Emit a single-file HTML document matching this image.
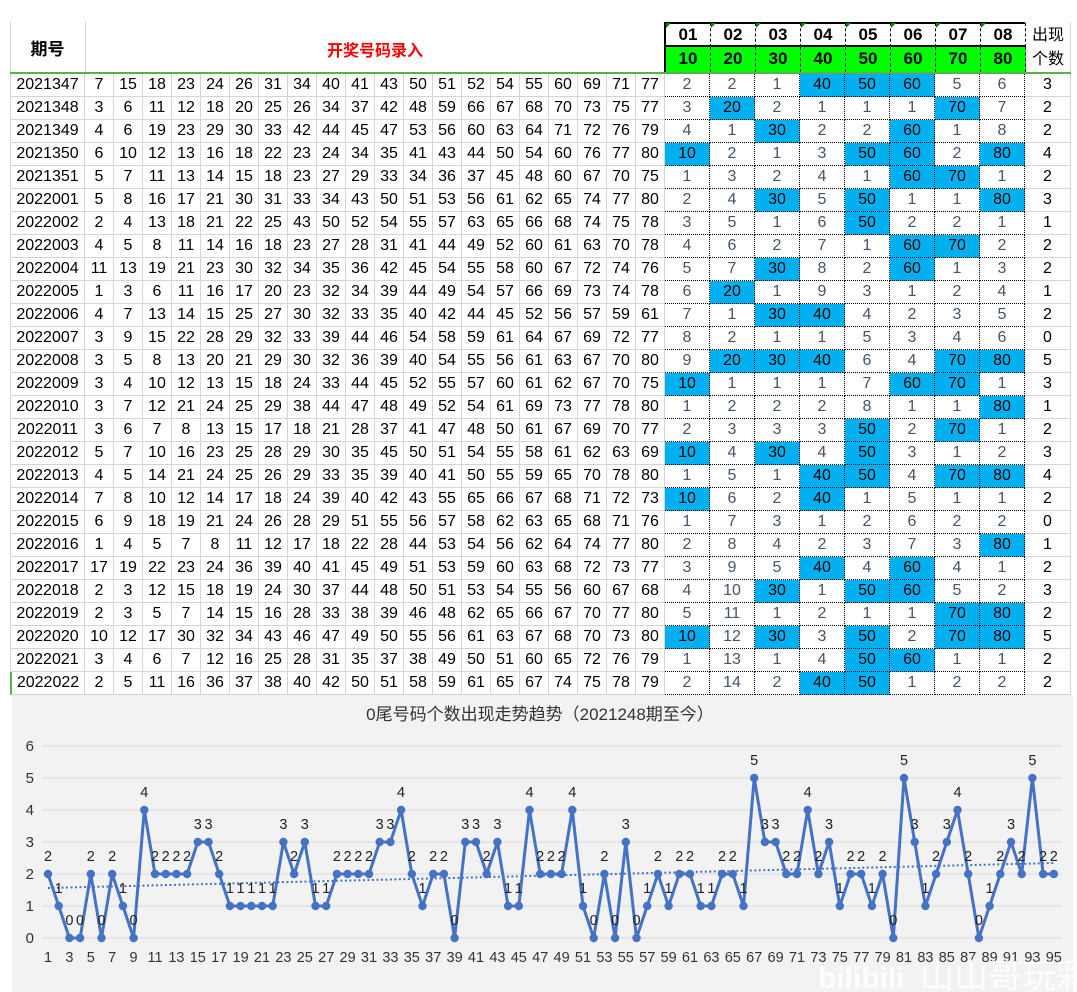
<!DOCTYPE html>
<html><head><meta charset="utf-8"><style>
*{box-sizing:border-box;margin:0;padding:0}
body{width:1077px;height:992px;background:#fff;position:relative;overflow:hidden;font-family:"Liberation Sans","Noto Sans CJK SC",sans-serif;color:#000}
.a{position:absolute}
#t{position:absolute;left:10px;top:72px;border-top:2px solid #5cb04a}
.r{display:flex;height:23px}
.r>*{display:block;height:23px;line-height:22px;text-align:center;font-size:16px;font-style:normal;font-weight:normal;text-decoration:none;border-right:1px solid #d4d4d4;border-bottom:1px solid #d4d4d4}
.r s{width:75px;border-left:1px solid #d4d4d4}
.r i{width:29px}
.r b{width:45px;color:#44546a;border-right:1px dotted #000;border-bottom:1px dotted #000}
.r b.c{background:#00b0f0;color:#000}
.r u{width:46px}
.h1,.h2{position:absolute;width:45px;height:24px;line-height:24px;text-align:center;font-weight:bold;font-size:17px;border-right:1px dashed #000}
.h2{background:#00ff00;height:25px}
.tri{position:absolute;width:0;height:0;border-top:5px solid #008000;border-right:5px solid transparent}
</style></head><body>
<div class="a" style="left:10px;top:22px;width:1px;height:50px;background:#d4d4d4"></div>
<div class="a" style="left:85px;top:22px;width:1px;height:50px;background:#d4d4d4"></div>
<div class="a" style="left:10px;top:35px;width:75px;text-align:center;font-weight:bold;font-size:17px">期号</div>
<div class="a" style="left:290px;top:37px;width:170px;text-align:center;font-weight:bold;font-size:16px;color:#ff0000">开奖号码录入</div>
<div class="a" style="left:664px;top:22px;width:361px;height:50px;border:2px solid #000;border-right:none"></div>
<div class="a" style="left:664px;top:45px;width:361px;height:2px;background:#000"></div>
<div class="h1" style="left:666px;top:23px">01</div><div class="h1" style="left:711px;top:23px">02</div><div class="h1" style="left:756px;top:23px">03</div><div class="h1" style="left:801px;top:23px">04</div><div class="h1" style="left:846px;top:23px">05</div><div class="h1" style="left:891px;top:23px">06</div><div class="h1" style="left:936px;top:23px">07</div><div class="h1" style="left:981px;top:23px">08</div>
<div class="h2" style="left:666px;top:47px">10</div><div class="h2" style="left:711px;top:47px">20</div><div class="h2" style="left:756px;top:47px">30</div><div class="h2" style="left:801px;top:47px">40</div><div class="h2" style="left:846px;top:47px">50</div><div class="h2" style="left:891px;top:47px">60</div><div class="h2" style="left:936px;top:47px">70</div><div class="h2" style="left:981px;top:47px">80</div>
<div class="tri" style="left:666px;top:23px"></div><div class="tri" style="left:711px;top:23px"></div><div class="tri" style="left:756px;top:23px"></div><div class="tri" style="left:801px;top:23px"></div><div class="tri" style="left:846px;top:23px"></div><div class="tri" style="left:891px;top:23px"></div><div class="tri" style="left:936px;top:23px"></div><div class="tri" style="left:981px;top:23px"></div>
<div class="a" style="left:1025px;top:24px;width:46px;text-align:center;font-size:16px;line-height:24px">出现<br>个数</div>
<div class="a" style="left:1070px;top:22px;width:1px;height:50px;background:#d4d4d4"></div>

<div id="t">
<div class="r"><s>2021347</s><i>7</i><i>15</i><i>18</i><i>23</i><i>24</i><i>26</i><i>31</i><i>34</i><i>40</i><i>41</i><i>43</i><i>50</i><i>51</i><i>52</i><i>54</i><i>55</i><i>60</i><i>69</i><i>71</i><i>77</i><b>2</b><b>2</b><b>1</b><b class="c">40</b><b class="c">50</b><b class="c">60</b><b>5</b><b>6</b><u>3</u></div>
<div class="r"><s>2021348</s><i>3</i><i>6</i><i>11</i><i>12</i><i>18</i><i>20</i><i>25</i><i>26</i><i>34</i><i>37</i><i>42</i><i>48</i><i>59</i><i>66</i><i>67</i><i>68</i><i>70</i><i>73</i><i>75</i><i>77</i><b>3</b><b class="c">20</b><b>2</b><b>1</b><b>1</b><b>1</b><b class="c">70</b><b>7</b><u>2</u></div>
<div class="r"><s>2021349</s><i>4</i><i>6</i><i>19</i><i>23</i><i>29</i><i>30</i><i>33</i><i>42</i><i>44</i><i>45</i><i>47</i><i>53</i><i>56</i><i>60</i><i>63</i><i>64</i><i>71</i><i>72</i><i>76</i><i>79</i><b>4</b><b>1</b><b class="c">30</b><b>2</b><b>2</b><b class="c">60</b><b>1</b><b>8</b><u>2</u></div>
<div class="r"><s>2021350</s><i>6</i><i>10</i><i>12</i><i>13</i><i>16</i><i>18</i><i>22</i><i>23</i><i>24</i><i>34</i><i>35</i><i>41</i><i>43</i><i>44</i><i>50</i><i>54</i><i>60</i><i>76</i><i>77</i><i>80</i><b class="c">10</b><b>2</b><b>1</b><b>3</b><b class="c">50</b><b class="c">60</b><b>2</b><b class="c">80</b><u>4</u></div>
<div class="r"><s>2021351</s><i>5</i><i>7</i><i>11</i><i>13</i><i>14</i><i>15</i><i>18</i><i>23</i><i>27</i><i>29</i><i>33</i><i>34</i><i>36</i><i>37</i><i>45</i><i>48</i><i>60</i><i>67</i><i>70</i><i>75</i><b>1</b><b>3</b><b>2</b><b>4</b><b>1</b><b class="c">60</b><b class="c">70</b><b>1</b><u>2</u></div>
<div class="r"><s>2022001</s><i>5</i><i>8</i><i>16</i><i>17</i><i>21</i><i>30</i><i>31</i><i>33</i><i>34</i><i>43</i><i>50</i><i>51</i><i>53</i><i>56</i><i>61</i><i>62</i><i>65</i><i>74</i><i>77</i><i>80</i><b>2</b><b>4</b><b class="c">30</b><b>5</b><b class="c">50</b><b>1</b><b>1</b><b class="c">80</b><u>3</u></div>
<div class="r"><s>2022002</s><i>2</i><i>4</i><i>13</i><i>18</i><i>21</i><i>22</i><i>25</i><i>43</i><i>50</i><i>52</i><i>54</i><i>55</i><i>57</i><i>63</i><i>65</i><i>66</i><i>68</i><i>74</i><i>75</i><i>78</i><b>3</b><b>5</b><b>1</b><b>6</b><b class="c">50</b><b>2</b><b>2</b><b>1</b><u>1</u></div>
<div class="r"><s>2022003</s><i>4</i><i>5</i><i>8</i><i>11</i><i>14</i><i>16</i><i>18</i><i>23</i><i>27</i><i>28</i><i>31</i><i>41</i><i>44</i><i>49</i><i>52</i><i>60</i><i>61</i><i>63</i><i>70</i><i>78</i><b>4</b><b>6</b><b>2</b><b>7</b><b>1</b><b class="c">60</b><b class="c">70</b><b>2</b><u>2</u></div>
<div class="r"><s>2022004</s><i>11</i><i>13</i><i>19</i><i>21</i><i>23</i><i>30</i><i>32</i><i>34</i><i>35</i><i>36</i><i>42</i><i>45</i><i>54</i><i>55</i><i>58</i><i>60</i><i>67</i><i>72</i><i>74</i><i>76</i><b>5</b><b>7</b><b class="c">30</b><b>8</b><b>2</b><b class="c">60</b><b>1</b><b>3</b><u>2</u></div>
<div class="r"><s>2022005</s><i>1</i><i>3</i><i>6</i><i>11</i><i>16</i><i>17</i><i>20</i><i>23</i><i>32</i><i>34</i><i>39</i><i>44</i><i>49</i><i>54</i><i>57</i><i>66</i><i>69</i><i>73</i><i>74</i><i>78</i><b>6</b><b class="c">20</b><b>1</b><b>9</b><b>3</b><b>1</b><b>2</b><b>4</b><u>1</u></div>
<div class="r"><s>2022006</s><i>4</i><i>7</i><i>13</i><i>14</i><i>15</i><i>25</i><i>27</i><i>30</i><i>32</i><i>33</i><i>35</i><i>40</i><i>42</i><i>44</i><i>45</i><i>52</i><i>56</i><i>57</i><i>59</i><i>61</i><b>7</b><b>1</b><b class="c">30</b><b class="c">40</b><b>4</b><b>2</b><b>3</b><b>5</b><u>2</u></div>
<div class="r"><s>2022007</s><i>3</i><i>9</i><i>15</i><i>22</i><i>28</i><i>29</i><i>32</i><i>33</i><i>39</i><i>44</i><i>46</i><i>54</i><i>58</i><i>59</i><i>61</i><i>64</i><i>67</i><i>69</i><i>72</i><i>77</i><b>8</b><b>2</b><b>1</b><b>1</b><b>5</b><b>3</b><b>4</b><b>6</b><u>0</u></div>
<div class="r"><s>2022008</s><i>3</i><i>5</i><i>8</i><i>13</i><i>20</i><i>21</i><i>29</i><i>30</i><i>32</i><i>36</i><i>39</i><i>40</i><i>54</i><i>55</i><i>56</i><i>61</i><i>63</i><i>67</i><i>70</i><i>80</i><b>9</b><b class="c">20</b><b class="c">30</b><b class="c">40</b><b>6</b><b>4</b><b class="c">70</b><b class="c">80</b><u>5</u></div>
<div class="r"><s>2022009</s><i>3</i><i>4</i><i>10</i><i>12</i><i>13</i><i>15</i><i>18</i><i>24</i><i>33</i><i>44</i><i>45</i><i>52</i><i>55</i><i>57</i><i>60</i><i>61</i><i>62</i><i>67</i><i>70</i><i>75</i><b class="c">10</b><b>1</b><b>1</b><b>1</b><b>7</b><b class="c">60</b><b class="c">70</b><b>1</b><u>3</u></div>
<div class="r"><s>2022010</s><i>3</i><i>7</i><i>12</i><i>21</i><i>24</i><i>25</i><i>29</i><i>38</i><i>44</i><i>47</i><i>48</i><i>49</i><i>52</i><i>54</i><i>61</i><i>69</i><i>73</i><i>77</i><i>78</i><i>80</i><b>1</b><b>2</b><b>2</b><b>2</b><b>8</b><b>1</b><b>1</b><b class="c">80</b><u>1</u></div>
<div class="r"><s>2022011</s><i>3</i><i>6</i><i>7</i><i>8</i><i>13</i><i>15</i><i>17</i><i>18</i><i>21</i><i>28</i><i>37</i><i>41</i><i>47</i><i>48</i><i>50</i><i>61</i><i>67</i><i>69</i><i>70</i><i>77</i><b>2</b><b>3</b><b>3</b><b>3</b><b class="c">50</b><b>2</b><b class="c">70</b><b>1</b><u>2</u></div>
<div class="r"><s>2022012</s><i>5</i><i>7</i><i>10</i><i>16</i><i>23</i><i>25</i><i>28</i><i>29</i><i>30</i><i>35</i><i>45</i><i>50</i><i>51</i><i>54</i><i>55</i><i>58</i><i>61</i><i>62</i><i>63</i><i>69</i><b class="c">10</b><b>4</b><b class="c">30</b><b>4</b><b class="c">50</b><b>3</b><b>1</b><b>2</b><u>3</u></div>
<div class="r"><s>2022013</s><i>4</i><i>5</i><i>14</i><i>21</i><i>24</i><i>25</i><i>26</i><i>29</i><i>33</i><i>35</i><i>39</i><i>40</i><i>41</i><i>50</i><i>55</i><i>59</i><i>65</i><i>70</i><i>78</i><i>80</i><b>1</b><b>5</b><b>1</b><b class="c">40</b><b class="c">50</b><b>4</b><b class="c">70</b><b class="c">80</b><u>4</u></div>
<div class="r"><s>2022014</s><i>7</i><i>8</i><i>10</i><i>12</i><i>14</i><i>17</i><i>18</i><i>24</i><i>39</i><i>40</i><i>42</i><i>43</i><i>55</i><i>65</i><i>66</i><i>67</i><i>68</i><i>71</i><i>72</i><i>73</i><b class="c">10</b><b>6</b><b>2</b><b class="c">40</b><b>1</b><b>5</b><b>1</b><b>1</b><u>2</u></div>
<div class="r"><s>2022015</s><i>6</i><i>9</i><i>18</i><i>19</i><i>21</i><i>24</i><i>26</i><i>28</i><i>29</i><i>51</i><i>55</i><i>56</i><i>57</i><i>58</i><i>62</i><i>63</i><i>65</i><i>68</i><i>71</i><i>76</i><b>1</b><b>7</b><b>3</b><b>1</b><b>2</b><b>6</b><b>2</b><b>2</b><u>0</u></div>
<div class="r"><s>2022016</s><i>1</i><i>4</i><i>5</i><i>7</i><i>8</i><i>11</i><i>12</i><i>17</i><i>18</i><i>22</i><i>28</i><i>44</i><i>53</i><i>54</i><i>56</i><i>62</i><i>64</i><i>74</i><i>77</i><i>80</i><b>2</b><b>8</b><b>4</b><b>2</b><b>3</b><b>7</b><b>3</b><b class="c">80</b><u>1</u></div>
<div class="r"><s>2022017</s><i>17</i><i>19</i><i>22</i><i>23</i><i>24</i><i>36</i><i>39</i><i>40</i><i>41</i><i>45</i><i>49</i><i>51</i><i>53</i><i>59</i><i>60</i><i>63</i><i>68</i><i>72</i><i>73</i><i>77</i><b>3</b><b>9</b><b>5</b><b class="c">40</b><b>4</b><b class="c">60</b><b>4</b><b>1</b><u>2</u></div>
<div class="r"><s>2022018</s><i>2</i><i>3</i><i>12</i><i>15</i><i>18</i><i>19</i><i>24</i><i>30</i><i>37</i><i>44</i><i>48</i><i>50</i><i>51</i><i>53</i><i>54</i><i>55</i><i>56</i><i>60</i><i>67</i><i>68</i><b>4</b><b>10</b><b class="c">30</b><b>1</b><b class="c">50</b><b class="c">60</b><b>5</b><b>2</b><u>3</u></div>
<div class="r"><s>2022019</s><i>2</i><i>3</i><i>5</i><i>7</i><i>14</i><i>15</i><i>16</i><i>28</i><i>33</i><i>38</i><i>39</i><i>46</i><i>48</i><i>62</i><i>65</i><i>66</i><i>67</i><i>70</i><i>77</i><i>80</i><b>5</b><b>11</b><b>1</b><b>2</b><b>1</b><b>1</b><b class="c">70</b><b class="c">80</b><u>2</u></div>
<div class="r"><s>2022020</s><i>10</i><i>12</i><i>17</i><i>30</i><i>32</i><i>34</i><i>43</i><i>46</i><i>47</i><i>49</i><i>50</i><i>55</i><i>56</i><i>61</i><i>63</i><i>67</i><i>68</i><i>70</i><i>73</i><i>80</i><b class="c">10</b><b>12</b><b class="c">30</b><b>3</b><b class="c">50</b><b>2</b><b class="c">70</b><b class="c">80</b><u>5</u></div>
<div class="r"><s>2022021</s><i>3</i><i>4</i><i>6</i><i>7</i><i>12</i><i>16</i><i>25</i><i>28</i><i>31</i><i>35</i><i>37</i><i>38</i><i>49</i><i>50</i><i>51</i><i>60</i><i>65</i><i>72</i><i>76</i><i>79</i><b>1</b><b>13</b><b>1</b><b>4</b><b class="c">50</b><b class="c">60</b><b>1</b><b>1</b><u>2</u></div>
<div class="r"><s style="border-left:2px solid #5cb04a">2022022</s><i>2</i><i>5</i><i>11</i><i>16</i><i>36</i><i>37</i><i>38</i><i>40</i><i>42</i><i>50</i><i>51</i><i>58</i><i>59</i><i>61</i><i>65</i><i>67</i><i>74</i><i>75</i><i>78</i><i>79</i><b>2</b><b>14</b><b>2</b><b class="c">40</b><b class="c">50</b><b>1</b><b>2</b><b>2</b><u>2</u></div>
</div>

<svg class="a" style="left:0;top:0" width="1077" height="992" font-family="Liberation Sans, Noto Sans CJK SC, sans-serif">
<defs><marker id="m" markerUnits="userSpaceOnUse" markerWidth="10" markerHeight="10" refX="5" refY="5"><circle cx="5" cy="5" r="4.2" fill="#4472c4"/></marker></defs>
<rect x="12" y="695" width="1061" height="297" fill="#f2f2f2"/>
<text x="540" y="720" text-anchor="middle" font-size="17" fill="#333">0尾号码个数出现走势趋势（2021248期至今）</text>
<g stroke="#d9d9d9" stroke-width="1">
<line x1="42" x2="1062" y1="746" y2="746"/><line x1="42" x2="1062" y1="778" y2="778"/><line x1="42" x2="1062" y1="810" y2="810"/><line x1="42" x2="1062" y1="842" y2="842"/><line x1="42" x2="1062" y1="874" y2="874"/><line x1="42" x2="1062" y1="906" y2="906"/><line x1="42" x2="1062" y1="938" y2="938"/></g>
<g font-size="15" fill="#333" text-anchor="end">
<text x="34" y="751">6</text><text x="34" y="783">5</text><text x="34" y="815">4</text><text x="34" y="847">3</text><text x="34" y="879">2</text><text x="34" y="911">1</text><text x="34" y="943">0</text></g>
<g font-size="14.5" fill="#333" text-anchor="middle">
<text x="48" y="962">1</text><text x="69.4" y="962">3</text><text x="90.8" y="962">5</text><text x="112.2" y="962">7</text><text x="133.6" y="962">9</text><text x="155" y="962">11</text><text x="176.4" y="962">13</text><text x="197.8" y="962">15</text><text x="219.2" y="962">17</text><text x="240.6" y="962">19</text><text x="262" y="962">21</text><text x="283.4" y="962">23</text><text x="304.8" y="962">25</text><text x="326.2" y="962">27</text><text x="347.6" y="962">29</text><text x="369" y="962">31</text><text x="390.4" y="962">33</text><text x="411.8" y="962">35</text><text x="433.2" y="962">37</text><text x="454.6" y="962">39</text><text x="476" y="962">41</text><text x="497.4" y="962">43</text><text x="518.8" y="962">45</text><text x="540.2" y="962">47</text><text x="561.6" y="962">49</text><text x="583" y="962">51</text><text x="604.4" y="962">53</text><text x="625.8" y="962">55</text><text x="647.2" y="962">57</text><text x="668.6" y="962">59</text><text x="690" y="962">61</text><text x="711.4" y="962">63</text><text x="732.8" y="962">65</text><text x="754.2" y="962">67</text><text x="775.6" y="962">69</text><text x="797" y="962">71</text><text x="818.4" y="962">73</text><text x="839.8" y="962">75</text><text x="861.2" y="962">77</text><text x="882.6" y="962">79</text><text x="904" y="962">81</text><text x="925.4" y="962">83</text><text x="946.8" y="962">85</text><text x="968.2" y="962">87</text><text x="989.6" y="962">89</text><text x="1011" y="962">91</text><text x="1032.4" y="962">93</text><text x="1053.8" y="962">95</text></g>
<line x1="48" y1="888" x2="1054" y2="863" stroke="#4472c4" stroke-width="2" stroke-dasharray="2 2.5"/>
<polyline fill="none" stroke="#4472c4" stroke-width="3" stroke-linejoin="round" marker-start="url(#m)" marker-mid="url(#m)" marker-end="url(#m)" points="48,874 58.7,906 69.4,938 80.1,938 90.8,874 101.5,938 112.2,874 122.9,906 133.6,938 144.3,810 155,874 165.7,874 176.4,874 187.1,874 197.8,842 208.5,842 219.2,874 229.9,906 240.6,906 251.3,906 262,906 272.7,906 283.4,842 294.1,874 304.8,842 315.5,906 326.2,906 336.9,874 347.6,874 358.3,874 369,874 379.7,842 390.4,842 401.1,810 411.8,874 422.5,906 433.2,874 443.9,874 454.6,938 465.3,842 476,842 486.7,874 497.4,842 508.1,906 518.8,906 529.5,810 540.2,874 550.9,874 561.6,874 572.3,810 583,906 593.7,938 604.4,874 615.1,938 625.8,842 636.5,938 647.2,906 657.9,874 668.6,906 679.3,874 690,874 700.7,906 711.4,906 722.1,874 732.8,874 743.5,906 754.2,778 764.9,842 775.6,842 786.3,874 797,874 807.7,810 818.4,874 829.1,842 839.8,906 850.5,874 861.2,874 871.9,906 882.6,874 893.3,938 904,778 914.7,842 925.4,906 936.1,874 946.8,842 957.5,810 968.2,874 978.9,938 989.6,906 1000.3,874 1011,842 1021.7,874 1032.4,778 1043.1,874 1053.8,874"/>
<g font-size="14.5" fill="#222" text-anchor="middle">
<text x="48" y="861">2</text><text x="58.7" y="893">1</text><text x="69.4" y="925">0</text><text x="80.1" y="925">0</text><text x="90.8" y="861">2</text><text x="101.5" y="925">0</text><text x="112.2" y="861">2</text><text x="122.9" y="893">1</text><text x="133.6" y="925">0</text><text x="144.3" y="797">4</text><text x="155" y="861">2</text><text x="165.7" y="861">2</text><text x="176.4" y="861">2</text><text x="187.1" y="861">2</text><text x="197.8" y="829">3</text><text x="208.5" y="829">3</text><text x="219.2" y="861">2</text><text x="229.9" y="893">1</text><text x="240.6" y="893">1</text><text x="251.3" y="893">1</text><text x="262" y="893">1</text><text x="272.7" y="893">1</text><text x="283.4" y="829">3</text><text x="294.1" y="861">2</text><text x="304.8" y="829">3</text><text x="315.5" y="893">1</text><text x="326.2" y="893">1</text><text x="336.9" y="861">2</text><text x="347.6" y="861">2</text><text x="358.3" y="861">2</text><text x="369" y="861">2</text><text x="379.7" y="829">3</text><text x="390.4" y="829">3</text><text x="401.1" y="797">4</text><text x="411.8" y="861">2</text><text x="422.5" y="893">1</text><text x="433.2" y="861">2</text><text x="443.9" y="861">2</text><text x="454.6" y="925">0</text><text x="465.3" y="829">3</text><text x="476" y="829">3</text><text x="486.7" y="861">2</text><text x="497.4" y="829">3</text><text x="508.1" y="893">1</text><text x="518.8" y="893">1</text><text x="529.5" y="797">4</text><text x="540.2" y="861">2</text><text x="550.9" y="861">2</text><text x="561.6" y="861">2</text><text x="572.3" y="797">4</text><text x="583" y="893">1</text><text x="593.7" y="925">0</text><text x="604.4" y="861">2</text><text x="615.1" y="925">0</text><text x="625.8" y="829">3</text><text x="636.5" y="925">0</text><text x="647.2" y="893">1</text><text x="657.9" y="861">2</text><text x="668.6" y="893">1</text><text x="679.3" y="861">2</text><text x="690" y="861">2</text><text x="700.7" y="893">1</text><text x="711.4" y="893">1</text><text x="722.1" y="861">2</text><text x="732.8" y="861">2</text><text x="743.5" y="893">1</text><text x="754.2" y="765">5</text><text x="764.9" y="829">3</text><text x="775.6" y="829">3</text><text x="786.3" y="861">2</text><text x="797" y="861">2</text><text x="807.7" y="797">4</text><text x="818.4" y="861">2</text><text x="829.1" y="829">3</text><text x="839.8" y="893">1</text><text x="850.5" y="861">2</text><text x="861.2" y="861">2</text><text x="871.9" y="893">1</text><text x="882.6" y="861">2</text><text x="893.3" y="925">0</text><text x="904" y="765">5</text><text x="914.7" y="829">3</text><text x="925.4" y="893">1</text><text x="936.1" y="861">2</text><text x="946.8" y="829">3</text><text x="957.5" y="797">4</text><text x="968.2" y="861">2</text><text x="978.9" y="925">0</text><text x="989.6" y="893">1</text><text x="1000.3" y="861">2</text><text x="1011" y="829">3</text><text x="1021.7" y="861">2</text><text x="1032.4" y="765">5</text><text x="1043.1" y="861">2</text><text x="1053.8" y="861">2</text></g>
<text x="818" y="988" font-size="30" font-weight="bold" fill="#fff" fill-opacity="0.85">bilibili</text>
<text x="920" y="988" font-size="34" fill="#fff" fill-opacity="0.85">山山哥玩彩</text>
</svg>
</body></html>
